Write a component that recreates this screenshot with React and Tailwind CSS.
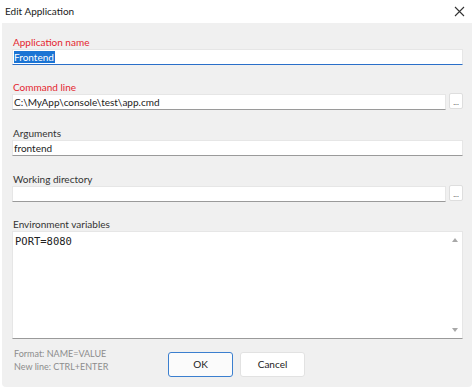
import React from "react";

function Label({ text, required }) {
  return (
    <div
      className={`h-[14px] text-[10px] leading-[14px] pl-[1px] ${
        required ? "text-[#e4262f]" : "text-[#333333]"
      }`}
    >
      {text}
    </div>
  );
}

function TextBox({ value, focused, selected, browse }) {
  return (
    <div className="flex items-start gap-[3px]">
      <div
        className={`flex-1 h-[16px] bg-white border border-[#e6e6e6] flex items-center px-[1px] text-[10px] text-[#222] ${
          focused ? "border-b-[#2a6fc9]" : "border-b-[#9a9a9a]"
        }`}
      >
        {selected ? (
          <span className="bg-[#1b74d4] text-white leading-[12px] pr-[1px]">{value}</span>
        ) : (
          <span className="leading-[14px]">{value}</span>
        )}
      </div>
      {browse && (
        <div className="w-[14px] h-[16px] -mt-[1px] bg-white border border-[#dedede] rounded-[2px] flex items-end justify-center pb-[2px] text-[8px] leading-[8px] text-[#555]">
          ...
        </div>
      )}
    </div>
  );
}

export default function App() {
  return (
    <div className="w-[474px] h-[390px] bg-white overflow-hidden" style={{ fontFamily: 'Lato, "Noto Sans", sans-serif' }}>
      <div className="h-[23px] flex items-center justify-between pl-[5px] pr-[9px]">
        <span className="text-[10px] text-[#1a1a1a]">Edit Application</span>
        <svg width="11" height="11" viewBox="0 0 11 11" className="text-[#333]">
          <path d="M1 1L10 10M10 1L1 10" stroke="currentColor" strokeWidth="1.1" />
        </svg>
      </div>
      <div className="mx-[2px] h-[364px] bg-[#f0f0f0] rounded-b-[4px] pl-[10px] pr-[9px] pt-[12px] flex flex-col">
        <Label text="Application name" required />
        <TextBox value="Frontend" focused selected />
        <div className="h-[15px]" />
        <Label text="Command line" required />
        <TextBox value="C:\MyApp\console\test\app.cmd" browse />
        <div className="h-[16px]" />
        <Label text="Arguments" />
        <TextBox value="frontend" />
        <div className="h-[16px]" />
        <Label text="Working directory" />
        <TextBox value="" browse />
        <div className="h-[15px]" />
        <Label text="Environment variables" />
        <div className="h-[108px] bg-white border border-[#e6e6e6] border-b-[#9a9a9a] flex">
          <div
            className="flex-1 pl-[2px] pt-[3px] text-[10.5px] leading-[12px] text-[#222]"
            style={{ fontFamily: '"DejaVu Sans Mono", "Liberation Mono", monospace' }}
          >
            PORT=8080
          </div>
          <div className="w-[12px] flex flex-col items-center justify-between pt-[6px] pb-[6px] mr-[1px]">
            <svg width="6" height="4" viewBox="0 0 6 4"><path d="M3 0L6 4H0Z" fill="#a8a8a8" /></svg>
            <svg width="6" height="4" viewBox="0 0 6 4"><path d="M0 0H6L3 4Z" fill="#a8a8a8" /></svg>
          </div>
        </div>
        <div className="flex items-start mt-[8px]">
          <div className="w-[156px] text-[9px] leading-[13px] text-[#8c8c8c] pl-[2px]">
            <div>Format: NAME=VALUE</div>
            <div>New line: CTRL+ENTER</div>
          </div>
          <div className="flex gap-[7px] mt-[5px]">
            <button className="w-[65px] h-[25px] bg-[#fbfbfb] border border-[#3b7fcf] rounded-[3px] text-[10px] text-[#222]">
              OK
            </button>
            <button className="w-[65px] h-[25px] bg-white border border-[#e2e2e2] rounded-[3px] text-[10px] text-[#222]">
              Cancel
            </button>
          </div>
        </div>
      </div>
    </div>
  );
}
